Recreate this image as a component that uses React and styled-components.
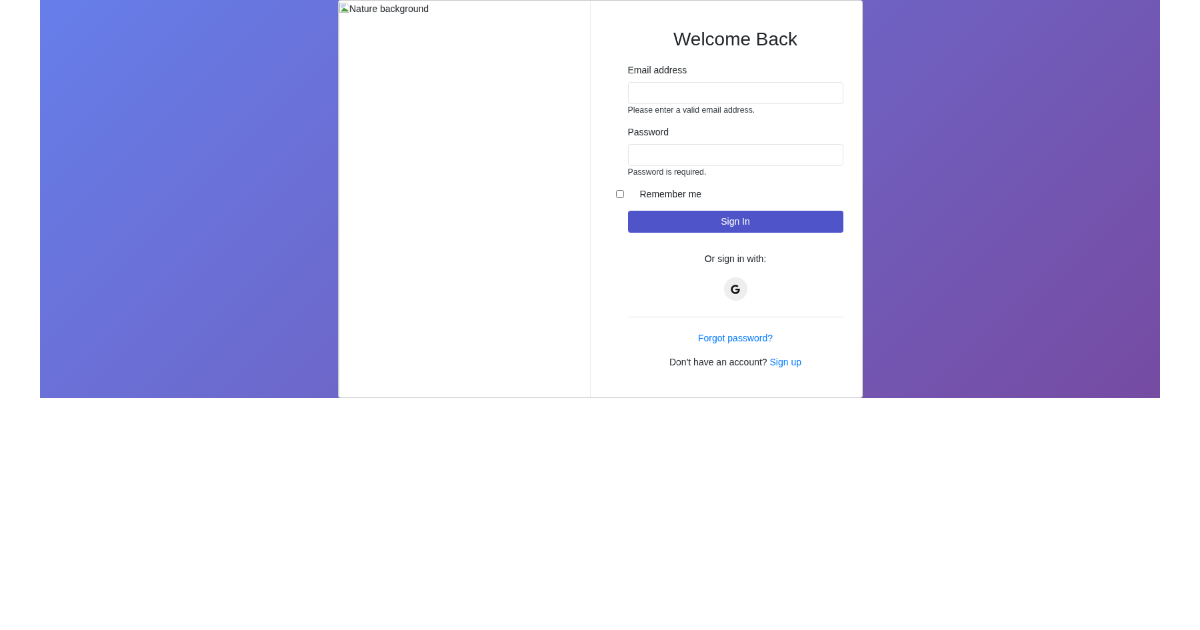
import React from 'react';
import styled, { createGlobalStyle } from 'styled-components';
import { FaGoogle } from 'react-icons/fa';

const GlobalStyle = createGlobalStyle`
  html, body {
    margin: 0;
    padding: 0;
    background: #fff;
    font-family: "Liberation Sans", Arial, sans-serif;
    color: #212529;
  }
  * { box-sizing: border-box; }
`;

const Page = styled.div`
  width: 1200px;
  height: 630px;
  padding: 0 40px;
`;

const Hero = styled.div`
  height: 398px;
  display: flex;
  justify-content: center;
  background: linear-gradient(135deg, #667eea 0%, #764ba2 100%);
`;

// the card is laid out at 1.5x and drawn at 2/3, which gives the soft text of the page
const CardFrame = styled.div`
  width: 525px;
  height: 398px;
`;

const Card = styled.div`
  width: 786.5px;
  height: 597px;
  display: flex;
  background: #fff;
  border: 1px solid rgba(0, 0, 0, 0.2);
  border-radius: 4px;
  transform: scale(0.6667);
  transform-origin: top left;
  will-change: transform;
`;

const ImageSide = styled.div`
  width: 378px;
  flex: none;
  border-right: 1.5px solid #ececec;
  border-left: 1.5px solid #d6d6dc;
  display: flex;
  align-items: flex-start;
  padding-top: 1.5px;
  font-size: 14px;
  line-height: 21px;
`;

const BrokenIcon = styled.svg`
  width: 15px;
  height: 15px;
  flex: none;
  margin-top: 1px;
`;

const FormSide = styled.div`
  flex: 1;
  padding: 41px 28px 0 55.5px;
`;

const Title = styled.h1`
  margin: 0 0 19px;
  font-size: 28px;
  line-height: 34px;
  font-weight: 400;
  text-align: center;
`;

const Field = styled.div`
  margin-bottom: 14px;
`;

const Label = styled.label`
  display: block;
  font-size: 14px;
  line-height: 21px;
  margin-bottom: 7px;
`;

const Input = styled.input`
  display: block;
  width: 100%;
  height: 33px;
  border: 1.5px solid #e2e5e8;
  border-radius: 4px;
  background: #fff;
  outline: 0;
`;

const Hint = styled.small`
  display: block;
  font-size: 12.25px;
  line-height: 18px;
  color: #343a40;
`;

const RememberRow = styled.div`
  display: flex;
  align-items: center;
  height: 21px;
  margin: 14px 0 14px -18px;
  font-size: 14px;
  line-height: 21px;
`;

const Check = styled.input`
  width: 12px;
  height: 12px;
  margin: -1px 24px 0 0;
`;

const SubmitButton = styled.button`
  display: block;
  width: 100%;
  height: 33px;
  padding: 0;
  border: 0;
  border-radius: 4px;
  background: #4f54c8;
  color: #fff;
  font: 14px/21px "Liberation Sans", Arial, sans-serif;
`;

const Social = styled.div`
  margin-top: 28.5px;
  text-align: center;
  font-size: 14px;
  line-height: 21px;
`;

const GoogleButton = styled.button`
  display: flex;
  align-items: center;
  justify-content: center;
  width: 35px;
  height: 35px;
  margin: 17.5px auto 0;
  padding: 0;
  border: 0;
  border-radius: 50%;
  background: #eeeeee;
  color: #111;
  font-size: 14px;
`;

const Divider = styled.hr`
  margin: 24px 0 21px;
  border: 0;
  border-top: 1.5px solid #e4e6e8;
`;

const Foot = styled.p`
  margin: 0 0 14.5px;
  text-align: center;
  font-size: 14px;
  line-height: 21px;
`;

const Link = styled.a`
  color: #007bff;
  text-decoration: none;
`;

export default function App() {
  return (
    <Page>
      <GlobalStyle />
      <Hero>
        <CardFrame>
          <Card>
            <ImageSide>
              <BrokenIcon viewBox="0 0 16 16">
                <path d="M0.5 0.5H11L15.5 5V15.5H0.5Z" fill="#fff" stroke="#b0b0b0" />
                <path d="M2 2H10.5V5.5L2 9.5Z" fill="#c3d4ee" />
                <path d="M2 14L7 8L14 12V14Z" fill="#4f9e3f" />
              </BrokenIcon>
              <span>Nature background</span>
            </ImageSide>
            <FormSide>
              <Title>Welcome Back</Title>
              <Field>
                <Label>Email address</Label>
                <Input type="email" />
                <Hint>Please enter a valid email address.</Hint>
              </Field>
              <Field>
                <Label>Password</Label>
                <Input type="password" />
                <Hint>Password is required.</Hint>
              </Field>
              <RememberRow>
                <Check type="checkbox" />
                <span>Remember me</span>
              </RememberRow>
              <SubmitButton>Sign In</SubmitButton>
              <Social>
                Or sign in with:
                <GoogleButton><FaGoogle /></GoogleButton>
              </Social>
              <Divider />
              <Foot><Link href="#">Forgot password?</Link></Foot>
              <Foot>Don't have an account? <Link href="#">Sign up</Link></Foot>
            </FormSide>
          </Card>
        </CardFrame>
      </Hero>
    </Page>
  );
}
